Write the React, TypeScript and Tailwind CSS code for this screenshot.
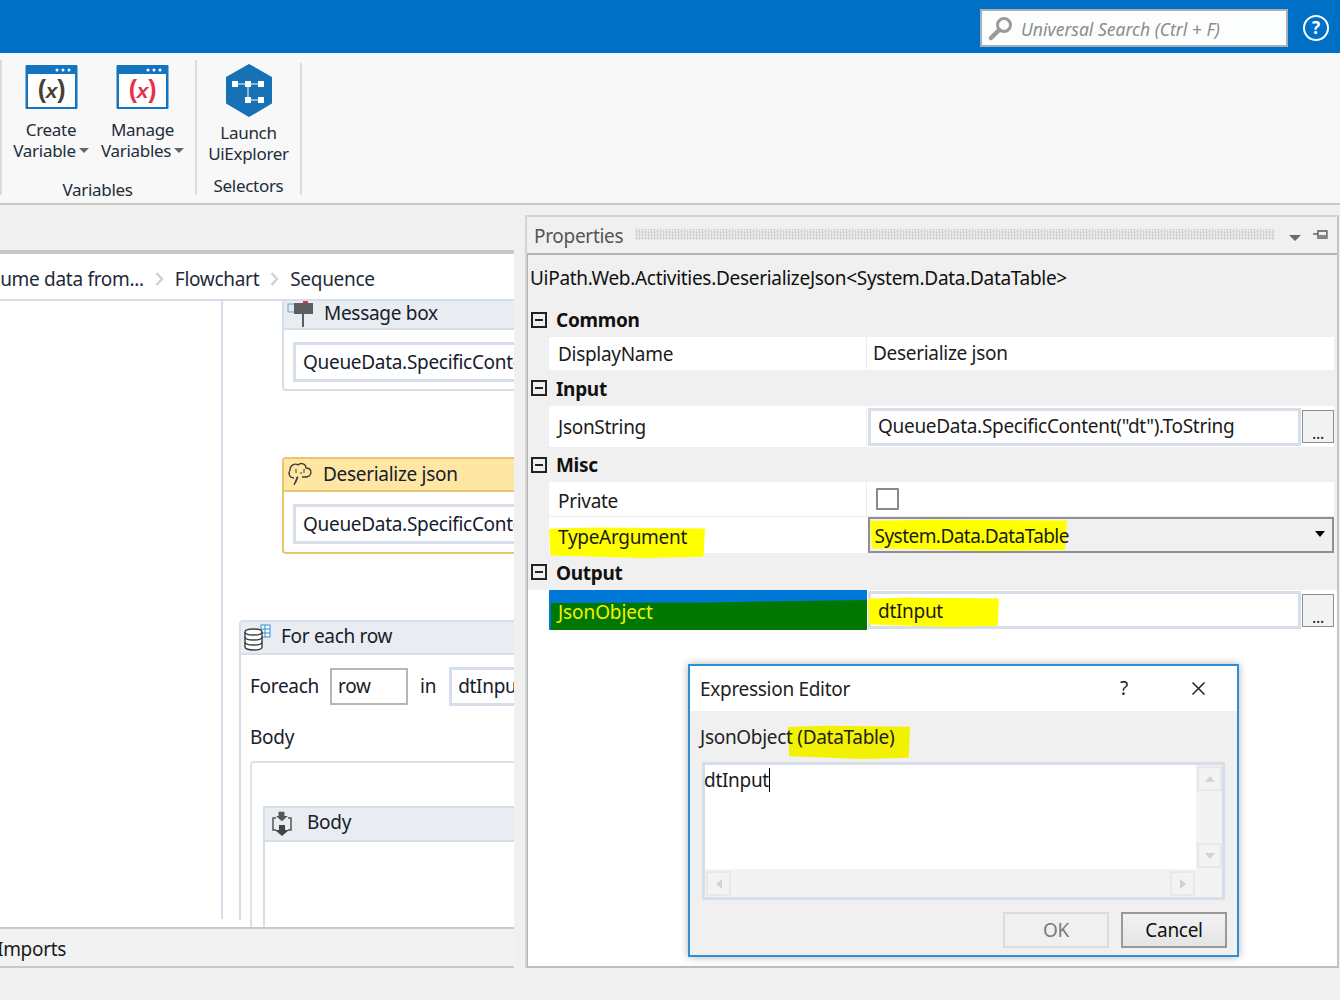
import React from "react";

const WinIcon = ({ color }: { color: string }) => (
  <svg width="53" height="45" viewBox="0 0 53 45">
    <rect x="0.5" width="52" height="44" rx="1" fill="#1474bd" />
    <rect x="3" y="9" width="47" height="33" fill="#fff" />
    <circle cx="32" cy="5" r="1.5" fill="#fff" />
    <circle cx="38" cy="5" r="1.5" fill="#fff" />
    <circle cx="44" cy="5" r="1.5" fill="#fff" />
    <text x="26.5" y="33" textAnchor="middle" fontFamily="Liberation Sans, sans-serif" fontWeight="700" fontSize="25" fill={color}>(<tspan fontStyle="italic" fontSize="21">x</tspan>)</text>
  </svg>
);

const HexIcon = () => (
  <svg width="48" height="53" viewBox="0 0 48 53">
    <path d="M24 1 L46 13.5 V39 L24 52 L2 39 V13.5 Z" fill="#1771b5" stroke="#1771b5" strokeLinejoin="round" strokeWidth="2" />
    <path d="M10 20 H36 M23 20 V36 M23 36 H36" stroke="#fff" strokeWidth="1" fill="none" />
    <rect x="7" y="17" width="6" height="6" fill="#fff" />
    <rect x="20" y="17" width="6" height="6" fill="#fff" />
    <rect x="33" y="17" width="6" height="6" fill="#fff" />
    <rect x="20" y="33" width="6" height="6" fill="#fff" />
    <rect x="33" y="33" width="6" height="6" fill="#fff" />
  </svg>
);

const Caret = () => <span className="inline-block ml-[3px] mb-[3px] border-x-[5px] border-t-[5px] border-x-transparent border-t-[#666] align-middle" />;

const Minus = () => (
  <span className="w-[16px] h-[16px] border-2 border-[#222] flex items-center justify-center shrink-0">
    <span className="w-[8px] h-[2px] bg-[#222]" />
  </span>
);

const Group = ({ label, h, text = "pt-[2px]" }: { label: string; h: string; text?: string }) => (
  <div className={`flex items-center pl-[3px] ${h}`}>
    <Minus />
    <span className={`ml-[9px] font-bold text-[#111] ${text}`}>{label}</span>
  </div>
);

const Marker = ({ className, color = "#ffff00" }: { className: string; color?: string }) => (
  <svg className={`absolute ${className}`} viewBox="0 0 100 100" preserveAspectRatio="none">
    <path d="M0 6 L30 2 L100 5 L99 96 L60 100 L20 94 L1 92 Z" fill={color} />
  </svg>
);

const Ellipsis = () => (
  <div className="ml-[1px] w-[32px] h-[33px] bg-[#f2f2f2] border border-[#8e8e8e] flex items-end justify-center text-[16px] leading-[18px] text-[#222] shrink-0">...</div>
);

const Field = ({ children, className }: { children: React.ReactNode; className: string }) => (
  <div className={`border-[3px] border-[#d6deea] bg-white flex items-center overflow-hidden whitespace-nowrap ${className}`}>{children}</div>
);

const NodeHead = ({ icon, label, className }: { icon: React.ReactNode; label: string; className: string }) => (
  <div className={`flex items-center ${className}`}>
    {icon}
    <span>{label}</span>
  </div>
);

const ScrollBtn = ({ d }: { d: string }) => (
  <div className="w-[25px] h-[25px] border-2 border-[#e8e8e8] bg-[#f3f3f3] flex items-center justify-center">
    <svg width="12" height="12" viewBox="0 0 12 12"><path d={d} fill="#d2d2d2" /></svg>
  </div>
);

export default function App() {
  return (
    <div className="relative w-[1340px] h-[1000px] overflow-hidden bg-[#f0f0f0] text-[19px] tracking-[-0.3px] text-[#1b1b1b] font-['Noto_Sans',sans-serif]">
      {/* title bar */}
      <div className="h-[53px] bg-[#0070c6] flex items-center justify-end pr-[11px]">
        <div className="w-[308px] h-[38px] mt-[2px] bg-[#fcfdfd] border-[2px] border-[#a6b0bb] flex items-center pl-[6px]">
          <svg width="26" height="26" viewBox="0 0 26 26">
            <circle cx="16" cy="10" r="6.5" fill="none" stroke="#9a9a9a" strokeWidth="3" />
            <path d="M11 15 L3 23" stroke="#9a9a9a" strokeWidth="4.5" strokeLinecap="round" />
          </svg>
          <span className="ml-[7px] pt-[3px] text-[17.5px] italic text-[#8c8c8c] tracking-[0px]">Universal Search (Ctrl + F)</span>
        </div>
        <div className="ml-[15px] mt-[3px] w-[26px] h-[26px] rounded-full border-2 border-white flex items-center justify-center text-white text-[17px] font-bold tracking-[0]">?</div>
      </div>

      {/* ribbon */}
      <div className="h-[152px] bg-[#f8f8f8] border-b-[2px] border-[#c9c9c9] flex items-start text-[17px] leading-[21px] text-[#222d3a] tracking-[-0.3px]">
        <div className="w-[197px] h-[135px] mt-[7px] border-r-2 border-[#dcdcdc] border-l-2 flex flex-col">
          <div className="flex">
            <div className="w-[96px] ml-[1px] flex flex-col items-center pt-[5px]">
              <WinIcon color="#4a3f35" />
              <div className="mt-[9px] text-center">Create<br />Variable<Caret /></div>
            </div>
            <div className="w-[87px] flex flex-col items-center pt-[5px]">
              <WinIcon color="#e8304a" />
              <div className="mt-[9px] text-center whitespace-nowrap">Manage<br />Variables<Caret /></div>
            </div>
          </div>
          <div className="mt-[18px] pr-[2px] text-center">Variables</div>
        </div>
        <div className="w-[105px] h-[132px] mt-[10px] border-r-2 border-[#dcdcdc] flex flex-col items-center">
          <div className="mt-[1px]"><HexIcon /></div>
          <div className="mt-[5px] text-center">Launch<br />UiExplorer</div>
          <div className="mt-[11px]">Selectors</div>
        </div>
      </div>

      {/* main */}
      <div className="flex h-[763px]">
        {/* designer */}
        <div className="w-[514px] overflow-hidden flex flex-col pt-[45px]">
          <div className="flex-1 bg-white border-t-[4px] border-[#c8c8c8] flex flex-col min-h-0 overflow-hidden">
            <div className="h-[47px] shrink-0 border-b-2 border-[#d6deea] flex items-center whitespace-nowrap text-[#1e2a3a] pt-[5px]">
              <span className="ml-[-43px]">Consume data from...</span>
              <svg className="mx-[11px]" width="9" height="14" viewBox="0 0 9 14"><path d="M1.5 1 L7 7 L1.5 13" fill="none" stroke="#ccd3dc" strokeWidth="2.5" /></svg>
              <span>Flowchart</span>
              <svg className="mx-[11px]" width="9" height="14" viewBox="0 0 9 14"><path d="M1.5 1 L7 7 L1.5 13" fill="none" stroke="#ccd3dc" strokeWidth="2.5" /></svg>
              <span>Sequence</span>
            </div>
            <div className="flex-1 min-h-0 overflow-hidden">
              <div className="ml-[221px] w-[500px] h-[618px] border-l-2 border-[#d6deea] text-[#16202c]">
                <div className="ml-[59px] w-[400px] h-[90px] border-2 border-t-0 border-[#d6deea] rounded-b-[4px]">
                  <NodeHead
                    className="h-[29px] bg-[#e9ecf0] border-b-2 border-[#d6deea] pb-[3px]"
                    label="Message box"
                    icon={
                      <svg className="ml-[3px] mr-[9px] mt-[3px]" width="28" height="28" viewBox="0 0 28 28">
                        <rect x="1" y="3" width="9" height="8" fill="#dfe9f2" stroke="#6aa3cf" />
                        <rect x="7" y="2" width="19" height="11" fill="#5e5e5e" />
                        <rect x="16" y="0" width="5" height="2" fill="#e8304a" />
                        <rect x="15" y="13" width="2" height="13" fill="#5e5e5e" />
                      </svg>
                    }
                  />
                  <Field className="ml-[9px] mt-[12px] h-[40px] pl-[7px]">QueueData.SpecificContent("dt").ToString</Field>
                </div>
                <div className="ml-[59px] mt-[66px] w-[400px] h-[97px] border-2 border-[#e8c56f] rounded-[4px]">
                  <NodeHead
                    className="h-[33px] bg-[#ffe7a3] border-b-2 border-[#e8c56f] rounded-t-[3px] pb-[1px]"
                    label="Deserialize json"
                    icon={
                      <svg className="ml-[3px] mr-[10px]" width="26" height="28" viewBox="0 0 26 28">
                        <path d="M7 18 C2 18 1 13 3 10 C3 5 8 3 11 5 C14 2 19 4 19 8 C24 8 25 12 23 15 C22 17 20 17 15 17" fill="none" stroke="#3c3c3c" strokeWidth="1.3" />
                        <path d="M9 9 V13 M13 13 H15 M17 9 V13" stroke="#3c3c3c" strokeWidth="1" />
                        <path d="M10 17 L7 25 L9 22 L11 17 Z" fill="#3c3c3c" stroke="#3c3c3c" />
                      </svg>
                    }
                  />
                  <Field className="ml-[9px] mt-[12px] h-[40px] pl-[7px]">QueueData.SpecificContent("dt").ToString</Field>
                </div>
                <div className="ml-[16px] mt-[66px] w-[400px] h-[300px] border-l-2 border-t-2 border-[#d6deea] rounded-tl-[4px]">
                  <NodeHead
                    className="h-[33px] bg-[#e9ecf0] border-b-2 border-[#d6deea] pb-[3px]"
                    label="For each row"
                    icon={
                      <svg className="ml-[3px] mr-[10px] mt-[3px]" width="27" height="28" viewBox="0 0 27 28">
                        <rect x="17" y="1" width="9" height="12" fill="#fff" stroke="#2f8fd0" />
                        <path d="M17 5 H26 M17 9 H26 M21 1 V13" stroke="#2f8fd0" />
                        <path d="M1 8 C1 4 18 4 18 8 V23 C18 27 1 27 1 23 Z" fill="#fff" stroke="#3c3c3c" strokeWidth="1.4" />
                        <path d="M1 8 C1 12 18 12 18 8 M1 13 C1 17 18 17 18 13 M1 18 C1 22 18 22 18 18" fill="none" stroke="#3c3c3c" strokeWidth="1.4" />
                      </svg>
                    }
                  />
                  <div className="flex items-center h-[39px] mt-[12px] ml-[9px]">
                    <span>Foreach</span>
                    <div className="ml-[11px] w-[82px] h-[37px] border-2 border-[#b6b6b6] flex items-center pl-[6px]">row</div>
                    <span className="ml-[12px]">in</span>
                    <Field className="ml-[13px] w-[200px] h-[39px] pl-[6px]">dtInput</Field>
                  </div>
                  <div className="ml-[9px] mt-[17px] leading-[28px]">Body</div>
                  <div className="ml-[9px] mt-[10px] h-[200px] border-2 border-b-0 border-[#e0e0e0] rounded-tl-[4px] pt-[43px] pl-[11px]">
                    <div className="h-[200px] border-l-2 border-t-2 border-[#d6deea]">
                      <NodeHead
                        className="h-[34px] bg-[#e9ecf0] border-b-2 border-[#d6deea] pb-[3px]"
                        label="Body"
                        icon={
                          <svg className="ml-[5px] mr-[13px] mt-[3px]" width="24" height="26" viewBox="0 0 24 26">
                            <path d="M6 7 H3 V19 H6 M18 7 H21 V19 H18" fill="none" stroke="#555" strokeWidth="1.5" />
                            <path d="M8 1 H15 V6 H19 L12 12 L5 6 H8 Z" fill="#555" transform="scale(0.85) translate(2,0)" />
                            <path d="M9 14 H15 V19 H19 L12 25 L5 19 H9 Z" fill="#444" />
                          </svg>
                        }
                      />
                    </div>
                  </div>
                </div>
              </div>
            </div>
          </div>
          <div className="h-[41px] shrink-0 bg-[#f2f2f2] border-y-2 border-[#c8c8c8] flex items-center whitespace-nowrap pt-[3px]">
            <span className="ml-[-3px]">Imports</span>
          </div>
        </div>

        {/* properties */}
        <div className="relative ml-[11px] mt-[10px] w-[814px] h-[753px] border-t-2 border-l-2 border-r-2 border-b-2 border-[#d4d4d4] border-b-[#bdbdbd] border-r-[#c4c4c4] bg-white flex flex-col">
          <div className="h-[38px] shrink-0 border-b-2 border-[#b4b4b4] bg-[#f0f0f0] flex items-center pl-[7px] pr-[9px] text-[#555]">
            <span className="pt-[2px]">Properties</span>
            <div className="ml-[12px] mt-[-2px] w-[644px] h-[11px] bg-[conic-gradient(#d2d2d2_25%,transparent_0_50%,#d2d2d2_0_75%,transparent_0)] bg-[length:3px_3px]" />
            <span className="ml-[14px] mt-[5px] border-x-[6px] border-t-[6px] border-x-transparent border-t-[#6a6a6a]" />
            <svg className="ml-[12px] mt-[-1px]" width="15" height="12" viewBox="0 0 15 12">
              <path d="M0 5 H5" stroke="#555" strokeWidth="1.4" />
              <path d="M5 2 H14 V9 H5 Z" fill="none" stroke="#555" strokeWidth="1.4" />
              <rect x="5" y="6" width="9" height="3" fill="#888" />
            </svg>
          </div>
          <div className="h-[335px] shrink-0 bg-[#f0f0f0] border-l border-[#b4b4b4]">
            <div className="h-[48px] flex items-center pl-[2px] pb-[2px] text-[#111] whitespace-nowrap">UiPath.Web.Activities.DeserializeJson&lt;System.Data.DataTable&gt;</div>
            <Group label="Common" h="h-[34px]" text="" />
            <div className="ml-[21px] mr-[3px] h-[33px] bg-white flex items-center">
              <div className="w-[318px] h-full border-r border-[#ececec] pl-[9px] pt-[2px] flex items-center">DisplayName</div>
              <div className="pl-[6px]">Deserialize json</div>
            </div>
            <Group label="Input" h="h-[36px]" />
            <div className="ml-[21px] mr-[3px] h-[41px] bg-white flex items-center">
              <div className="w-[318px] h-full border-r border-[#ececec] pl-[9px] pt-[2px] flex items-center">JsonString</div>
              <Field className="ml-[1px] w-[433px] h-[38px] pl-[7px] border-2">QueueData.SpecificContent("dt").ToString</Field>
              <Ellipsis />
            </div>
            <Group label="Misc" h="h-[35px]" />
            <div className="ml-[21px] mr-[3px] h-[35px] bg-white flex items-center border-b border-[#ececec]">
              <div className="w-[318px] h-full border-r border-[#ececec] pl-[9px] pt-[4px] flex items-center">Private</div>
              <div className="ml-[9px] mt-[-1px] w-[23px] h-[22px] border-2 border-[#8a8a8a] rounded-[1px] bg-white" />
            </div>
            <div className="ml-[21px] mr-[3px] h-[36px] bg-white flex items-center">
              <div className="relative w-[318px] h-full pl-[9px] pt-[5px] flex items-center">
                <Marker className="left-0 top-[10px] w-[156px] h-[31px]" />
                <span className="relative">TypeArgument</span>
              </div>
              <div className="relative w-[467px] h-[36px] ml-[1px] bg-[#f0f0f0] border-2 border-[#8f8f8f] flex items-center pl-[5px] pt-[3px]">
                <Marker className="left-0 top-0 w-[197px] h-[32px]" />
                <span className="relative tracking-[-0.55px]">System.Data.DataTable</span>
                <span className="absolute right-[7px] top-[12px] border-x-[5px] border-t-[6px] border-x-transparent border-t-black" />
              </div>
            </div>
            <Group label="Output" h="h-[37px] pt-[1px]" text="pt-[3px]" />
          </div>
          <div className="flex-1 min-h-0 bg-white border-l border-[#b4b4b4]">
            <div className="ml-[21px] mr-[3px] h-[40px] flex items-center">
              <div className="relative w-[318px] h-full bg-[#0078d7] pl-[9px] flex items-center text-[#f2f200]">
                <svg className="absolute left-[2px] top-[10px] w-[316px] h-[30px]" viewBox="0 0 100 100" preserveAspectRatio="none"><path d="M0 10 L50 8 L100 0 V100 L0 100 Z" fill="#007700" /></svg>
                <span className="relative pt-[4px] tracking-[-0.1px]">JsonObject</span>
              </div>
              <div className="relative ml-[1px] w-[433px] h-[38px]">
                <Field className="w-full h-full pl-[7px] border-2">
                  <Marker className="left-0 top-[6px] w-[131px] h-[30px]" />
                  <span className="relative pt-[3px]">dtInput</span>
                </Field>
              </div>
              <Ellipsis />
            </div>
          </div>

          {/* dialog */}
          <div className="absolute left-[161px] top-[447px] w-[551px] h-[293px] bg-[#f0f0f0] border-2 border-[#2f8fd6] shadow-[0_0_8px_rgba(0,0,0,0.3)] flex flex-col">
            <div className="h-[45px] shrink-0 bg-white flex items-center pl-[10px]">
              <span className="pt-[2px] text-[#222]">Expression Editor</span>
              <span className="ml-auto mr-[63px] text-[#222]">?</span>
              <svg className="mr-[31px]" width="15" height="15" viewBox="0 0 15 15"><path d="M1.5 1.5 L13.5 13.5 M13.5 1.5 L1.5 13.5" stroke="#222" strokeWidth="1.5" /></svg>
            </div>
            <div className="relative h-[51px] shrink-0 pl-[10px] flex items-center pt-[1px]">
              <Marker className="left-[98px] top-[14px] w-[122px] h-[34px]" color="#f2f200" />
              <span className="relative text-[#222]">JsonObject (DataTable)</span>
            </div>
            <div className="ml-[12px] w-[523px] h-[138px] border-[3px] border-[#d6deea] flex flex-col bg-[#f3f3f3]">
              <div className="flex h-[104px]">
                <div className="w-[492px] bg-white pt-[1px] flex items-start">
                  <span className="ml-[-1px]">dtInput</span>
                  <span className="w-[1px] h-[24px] bg-black mt-[2px]" />
                </div>
                <div className="flex flex-col justify-between py-[1px] pl-[1px]">
                  <ScrollBtn d="M6 3 L11 9 H1 Z" />
                  <ScrollBtn d="M6 9 L1 3 H11 Z" />
                </div>
              </div>
              <div className="flex justify-between pt-[2px] pr-[27px] pl-[1px]">
                <ScrollBtn d="M3 6 L9 1 V11 Z" />
                <ScrollBtn d="M9 6 L3 1 V11 Z" />
              </div>
            </div>
            <div className="flex justify-end mt-[12px] pr-[10px] gap-[12px]">
              <div className="w-[106px] h-[36px] border-2 border-[#dcdcdc] bg-[#f0f0f0] flex items-center justify-center text-[#7a7a7a]">OK</div>
              <div className="w-[106px] h-[36px] border-2 border-[#999] bg-gradient-to-b from-[#f2f2f2] to-[#e4e4e4] flex items-center justify-center text-[#111]">Cancel</div>
            </div>
          </div>
        </div>
      </div>
    </div>
  );
}
